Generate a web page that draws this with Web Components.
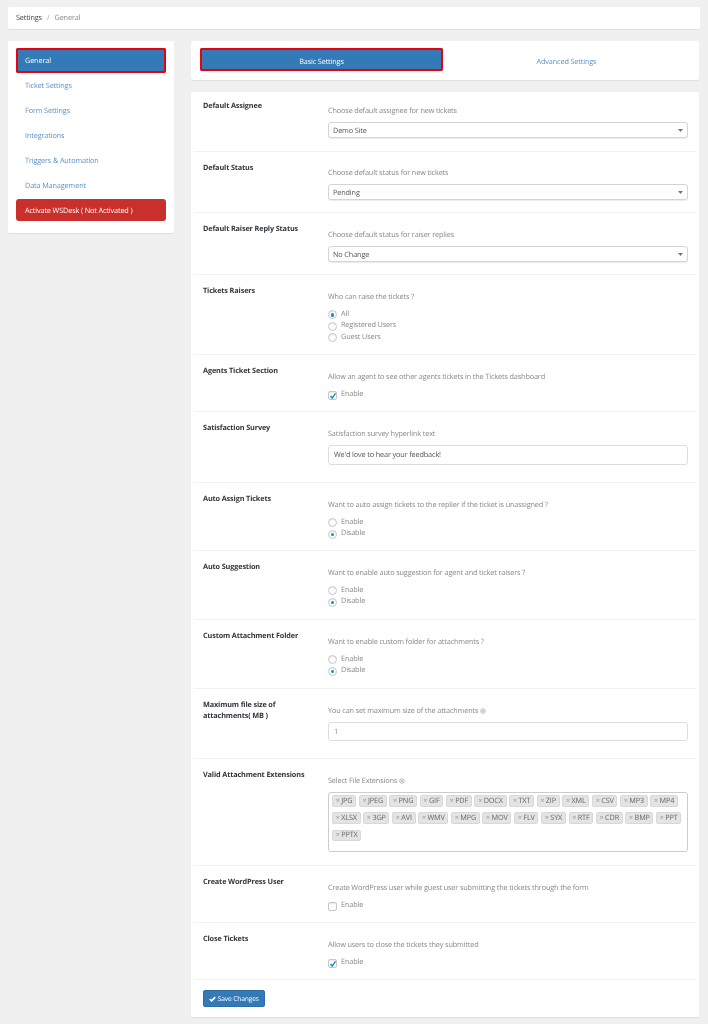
<!DOCTYPE html>
<html lang="en"><head><meta charset="utf-8"><title>Settings</title>
<style>
html,body{margin:0;background:#f0f0f0}
body{font:7.3px/12px "Open Sans",sans-serif;letter-spacing:-.14px;text-rendering:geometricPrecision;color:#555;padding:7px 8px 6px;height:1011px;overflow:hidden;filter:blur(.3px)}
</style></head><body>
<script>
const def=(name,css,html)=>{customElements.define(name,class extends HTMLElement{
  constructor(){super();const s=this.attachShadow({mode:'open'});s.innerHTML='<style>'+css+'</style>'+html;}
})};
const help='<svg width="6" height="6" viewBox="0 0 6 6" style="vertical-align:-.5px"><circle cx="3" cy="3" r="2.300" fill="none" stroke="#aaa" stroke-width=".8"/><circle cx="3" cy="3" r=".9" fill="#aaa"/></svg>';
def('wsd-card',':host{display:block;background:#fff;border-radius:2px;box-shadow:0 1px 1px rgba(0,0,0,.07)}','<slot></slot>');
def('wsd-breadcrumb',':host{display:flex;align-items:center;height:22px;box-sizing:border-box;padding:0 0 1px 8px;width:692px;background:#fff;border-radius:2px;box-shadow:0 1px 1px rgba(0,0,0,.06);margin-bottom:12px;color:#444}b{font-weight:400;color:#aaa;margin:0 5px}i{font-style:normal;color:#888}','<span>Settings</span><b>/</b><i>General</i>');
def('wsd-layout',':host{display:grid;grid-template-columns:166px 508px;column-gap:17px;align-items:start}','<slot></slot>');
def('wsd-side',':host{display:block;background:#fff;border-radius:2px;box-shadow:0 1px 1px rgba(0,0,0,.07);padding:7px 8px 12px}','<slot></slot>');
def('wsd-main',':host{display:flex;flex-direction:column;gap:12px}','<slot></slot>');
def('wsd-nav-item',`:host{display:flex;align-items:center;height:25px;padding:1px 0 0 9px;color:#5b93c7;box-sizing:border-box}
:host([active]){background:#337ab7;color:#fff;outline:2px solid #e8000f;outline-offset:-2px;border-radius:2px;height:25px}
:host([danger]){background:#c9302c;color:#fff;border-radius:3px;height:22px;margin-top:1px}`,'<slot></slot>');
def('wsd-tabs',':host{display:grid;grid-template-columns:243px 247px;padding:7px 9px 9px;background:#fff;border-radius:2px;box-shadow:0 1px 1px rgba(0,0,0,.07)}','<slot></slot>');
def('wsd-tab',`:host{display:flex;align-items:center;justify-content:center;height:23px;padding-top:4px;box-sizing:border-box;color:#5b93c7}
:host([active]){background:#337ab7;color:#fff;outline:2px solid #e8000f;outline-offset:-2px;border-radius:2px}`,'<slot></slot>');
def('wsd-row',`:host{display:grid;grid-template-columns:125px 360px;margin:0 3px;padding:10px 0 var(--pb,10px) 9px;border-bottom:1px solid #f2f2f2}
:host([first]){padding-top:7px}
:host([first]) .t{padding-top:2px}
.t{font-weight:700;color:#32373c;line-height:10.5px;padding-top:1px;white-space:pre-line}
.d{padding-top:var(--dt,6px)}.desc{color:#888;line-height:12px;padding:0 0 5px;white-space:nowrap}`,
'<div class="t"><slot name="title"></slot></div><div class="d"><div class="desc"><slot name="desc"></slot></div><slot></slot></div>');
def('wsd-help',':host{display:inline}',help);
def('wsd-select',`:host{display:flex;align-items:center;justify-content:space-between;height:16px;box-sizing:border-box;padding:1px 4px 0;background:#fff;border:1px solid #d4d4d4;border-radius:3px;box-shadow:0 1px 1px rgba(0,0,0,.08);color:#555}
svg{display:block}`,'<slot></slot><svg width="5" height="3" viewBox="0 0 5 3"><path d="M0 0h5L2.500 3z" fill="#777"/></svg>');
def('wsd-input',`:host{display:flex;align-items:center;height:var(--h,20px);box-sizing:border-box;padding:0 5px;background:#fff;border:1px solid #ddd;border-radius:3px;color:var(--c,#555)}`,'<slot></slot>');
def('wsd-radio',`:host{display:flex;align-items:center;height:11.5px;color:#888}
:host(:first-of-type){margin-top:1px}
span{margin-top:-2px}
i{width:9px;height:9px;box-sizing:border-box;border:1px solid #c4c8cc;border-radius:50%;margin-right:4px;display:flex;align-items:center;justify-content:center;background:#fdfdfd;box-shadow:inset 0 1px 1px rgba(0,0,0,.08)}
:host([checked]) i::after{content:"";width:3.500px;height:3.500px;border-radius:50%;background:#1e8cbe}`,'<i></i><span><slot></slot></span>');
def('wsd-check',`:host{display:flex;align-items:center;height:12px;margin-top:1px;color:#888}
span{margin-top:-2px}
i{width:9px;height:9px;box-sizing:border-box;border:1px solid #c4c8cc;border-radius:2px;margin-right:4px;background:#fdfdfd;box-shadow:inset 0 1px 1px rgba(0,0,0,.08);position:relative}
svg{position:absolute;left:0;top:0;display:none}:host([checked]) svg{display:block}`,
'<i><svg width="8" height="8" viewBox="0 0 8 8"><path d="M1.500 4l1.700 2L6.500 1.300" fill="none" stroke="#1e8cbe" stroke-width="1.400"/></svg></i><span><slot></slot></span>');
def('wsd-tags',`:host{display:flex;flex-wrap:wrap;align-content:flex-start;gap:5.8px 2.7px;height:60px;box-sizing:border-box;padding:2px 3px;background:#fff;border:1px solid #ccc;border-radius:3px}`,'<slot></slot>');
def('wsd-tag',`:host{display:flex;align-items:center;height:11.500px;box-sizing:border-box;padding:0 2.650px;background:#e4e4e4;border:1px solid #d8d8d8;border-radius:2px;color:#666;white-space:nowrap}
b{font-weight:400;color:#999;margin-right:1.500px}`,'<b>×</b><slot></slot>');
def('wsd-button',`:host{display:inline-flex;align-items:center;height:17px;width:62px;justify-content:center;box-sizing:border-box;background:#337ab7;border:1px solid #2e6da4;border-radius:2px;color:#fff;font-size:6.700px}
svg{margin-right:1.500px}`,'<svg width="7" height="6" viewBox="0 0 7 6"><path d="M.8 3l1.800 1.800L6.200 1.200" fill="none" stroke="#fff" stroke-width="1.700"/></svg><slot></slot>');
def('wsd-footer',':host{display:block;padding:10px 12px 10px}','<slot></slot>');

const ext1=['JPG','JPEG','PNG','GIF','PDF','DOCX','TXT','ZIP','XML','CSV','MP3','MP4','XLSX','3GP','AVI','WMV','MPG','MOV','FLV','SYX','RTF','CDR','BMP','PPT','PPTX'];
document.body.insertAdjacentHTML('beforeend',`
<wsd-breadcrumb></wsd-breadcrumb>
<wsd-layout>
 <wsd-side>
  <wsd-nav-item active>General</wsd-nav-item>
  <wsd-nav-item>Ticket Settings</wsd-nav-item>
  <wsd-nav-item>Form Settings</wsd-nav-item>
  <wsd-nav-item>Integrations</wsd-nav-item>
  <wsd-nav-item>Triggers &amp; Automation</wsd-nav-item>
  <wsd-nav-item>Data Management</wsd-nav-item>
  <wsd-nav-item danger>Activate WSDesk ( Not Activated )</wsd-nav-item>
 </wsd-side>
 <wsd-main>
  <wsd-tabs><wsd-tab active>Basic Settings</wsd-tab><wsd-tab>Advanced Settings</wsd-tab></wsd-tabs>
  <wsd-card>
   <wsd-row first style="--pb:13px"><span slot="title">Default Assignee</span><span slot="desc">Choose default assignee for new tickets</span><wsd-select>Demo Site</wsd-select></wsd-row>
   <wsd-row style="--pb:12px;--dt:5px"><span slot="title">Default Status</span><span slot="desc">Choose default status for new tickets</span><wsd-select>Pending</wsd-select></wsd-row>
   <wsd-row style="--pb:12px"><span slot="title">Default Raiser Reply Status</span><span slot="desc">Choose default status for raiser replies</span><wsd-select>No Change</wsd-select></wsd-row>
   <wsd-row style="--pb:10.5px"><span slot="title">Tickets Raisers</span><span slot="desc">Who can raise the tickets ?</span><wsd-radio checked>All</wsd-radio><wsd-radio>Registered Users</wsd-radio><wsd-radio>Guest Users</wsd-radio></wsd-row>
   <wsd-row><span slot="title">Agents Ticket Section</span><span slot="desc">Allow an agent to see other agents tickets in the Tickets dashboard</span><wsd-check checked>Enable</wsd-check></wsd-row>
   <wsd-row style="--pb:17px"><span slot="title">Satisfaction Survey</span><span slot="desc">Satisfaction survey hyperlink text</span><wsd-input>We'd love to hear your feedback!</wsd-input></wsd-row>
   <wsd-row><span slot="title">Auto Assign Tickets</span><span slot="desc">Want to auto assign tickets to the replier if the ticket is unassigned ?</span><wsd-radio>Enable</wsd-radio><wsd-radio checked>Disable</wsd-radio></wsd-row>
   <wsd-row style="--pb:11px"><span slot="title">Auto Suggestion</span><span slot="desc">Want to enable auto suggestion for agent and ticket raisers ?</span><wsd-radio>Enable</wsd-radio><wsd-radio checked>Disable</wsd-radio></wsd-row>
   <wsd-row style="--pb:11px"><span slot="title">Custom Attachment Folder</span><span slot="desc">Want to enable custom folder for attachments ?</span><wsd-radio>Enable</wsd-radio><wsd-radio checked>Disable</wsd-radio></wsd-row>
   <wsd-row style="--pb:17px"><span slot="title">Maximum file size of
attachments( MB )</span><span slot="desc">You can set maximum size of the attachments <wsd-help></wsd-help></span><wsd-input style="--h:19px;--c:#888">1</wsd-input></wsd-row>
   <wsd-row style="--pb:13px"><span slot="title">Valid Attachment Extensions</span><span slot="desc">Select File Extensions <wsd-help></wsd-help></span><wsd-tags>${ext1.map(e=>'<wsd-tag>'+e+'</wsd-tag>').join('')}</wsd-tags></wsd-row>
   <wsd-row><span slot="title">Create WordPress User</span><span slot="desc">Create WordPress user while guest user submitting the tickets through the form</span><wsd-check>Enable</wsd-check></wsd-row>
   <wsd-row><span slot="title">Close Tickets</span><span slot="desc">Allow users to close the tickets they submitted</span><wsd-check checked>Enable</wsd-check></wsd-row>
   <wsd-footer><wsd-button>Save Changes</wsd-button></wsd-footer>
  </wsd-card>
 </wsd-main>
</wsd-layout>`);
</script>
</body></html>
